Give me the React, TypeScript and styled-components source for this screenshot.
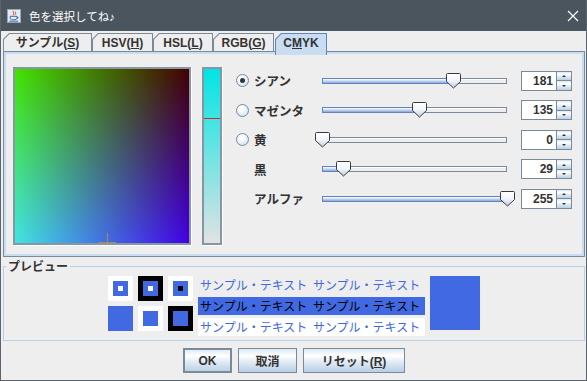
import React from "react";
import styled, { createGlobalStyle } from "styled-components";

const UI = `"Liberation Sans", "Noto Sans CJK JP", sans-serif`;
const JP = `"Noto Sans CJK JP", "Liberation Sans", sans-serif`;

const METAL = "linear-gradient(to bottom, #dde8f3 0%, #ffffff 30%, #dde8f3 60%, #b8cfe5 100%)";

const GlobalStyle = createGlobalStyle`
    html, body {
        margin: 0;
        padding: 0;
        background: #eeeeee;
    }
    body {
        font-family: ${UI};
    }
`;

const Window = styled.div`
    width: 587px;
    height: 381px;
    box-sizing: border-box;
    display: flex;
    flex-direction: column;
    background: #eeeeee;
    border: 1px solid #5a646c;
    border-top: none;
    overflow: hidden;
`;

const TitleBar = styled.div`
    flex: none;
    height: 31px;
    display: flex;
    align-items: center;
    padding: 0 8px 0 7px;
    background: #4b555d;
    margin: 0 -1px;
`;

const Title = styled.span`
    flex: 1;
    margin-left: 8px;
    color: #ffffff;
    font-family: ${UI};
    font-size: 11.5px;
`;

const Body = styled.div`
    flex: 1;
    display: flex;
    flex-direction: column;
    padding: 2px 1px 0 2px;
`;

const TabStrip = styled.div`
    display: flex;
    align-items: flex-end;
    height: 18px;
    position: relative;
    z-index: 2;
`;

const Tab = styled.div<{ $w: number; $active?: boolean }>`
    position: relative;
    flex: none;
    width: ${(p) => p.$w}px;
    height: ${(p) => (p.$active ? 22 : 18)}px;
    margin-bottom: ${(p) => (p.$active ? -4 : 0)}px;
    margin-left: ${(p) => (p.$active ? 1 : 0)}px;
    background: ${(p) => (p.$active ? "#6382bf" : "#7a8a99")};
    clip-path: polygon(0 6px, 6px 0, 100% 0, 100% 100%, 0 100%);
`;

const TabFace = styled.div<{ $active?: boolean }>`
    position: absolute;
    top: 1px;
    left: 1px;
    right: 1px;
    bottom: 0;
    display: flex;
    align-items: ${(p) => (p.$active ? "flex-start" : "center")};
    justify-content: center;
    padding-top: ${(p) => (p.$active ? 1 : 0)}px;
    box-sizing: border-box;
    background: ${(p) => (p.$active ? "#c8ddf2" : "#eeeeee")};
    clip-path: polygon(0 5.5px, 5.5px 0, 100% 0, 100% 100%, 0 100%);
    font-family: ${UI};
    font-weight: bold;
    font-size: 12px;
    line-height: 16px;
    color: #333333;
`;

const U = styled.span`
    text-decoration: underline;
    text-underline-offset: 1px;
`;

const TabPanel = styled.div`
    flex: none;
    height: 206px;
    box-sizing: border-box;
    display: flex;
    align-items: flex-start;
    padding: 15px 0 0 9px;
    border: 1px solid #7a8a99;
    box-shadow: inset 0 0 0 2px #c8ddf2;
`;

const ColorField = styled.div`
    position: relative;
    flex: none;
    width: 178px;
    height: 178px;
    box-sizing: border-box;
    border: 2px solid #8796a5;
    box-shadow: 1px 1px 0 #ffffff;
    background:
        linear-gradient(to bottom, rgb(0, 0, 0), rgb(0, 0, 228)),
        linear-gradient(to right, rgb(66, 228, 0), rgb(66, 0, 0));
    background-blend-mode: screen;
`;

const FieldMarker = styled.svg`
    position: absolute;
    bottom: 0;
`;

const ColorBar = styled.div`
    position: relative;
    flex: none;
    width: 20px;
    height: 178px;
    margin-left: 11px;
    box-sizing: border-box;
    border: 2px solid #8796a5;
    box-shadow: 1px 1px 0 #ffffff;
    background: linear-gradient(to bottom, rgb(0, 228, 228), rgb(226, 226, 226));
`;

const BarMarker = styled.div`
    position: absolute;
    left: 0;
    right: 0;
    height: 1px;
    background: #d62828;
`;

const Controls = styled.div`
    display: flex;
    flex-direction: column;
    margin: -1px 0 0 14px;
`;

const ControlRow = styled.div`
    display: grid;
    grid-template-columns: 18px 61px 200px 57px;
    align-items: center;
    height: 29.5px;
`;

const Radio = styled.span<{ $checked?: boolean }>`
    width: 13px;
    height: 13px;
    box-sizing: border-box;
    border-radius: 50%;
    border: 1px solid #7a8a99;
    background: radial-gradient(circle at 40% 35%, #ffffff 20%, #c8ddf2 90%);
    display: flex;
    align-items: center;
    justify-content: center;

    &::after {
        content: "";
        display: ${(p) => (p.$checked ? "block" : "none")};
        width: 5px;
        height: 5px;
        border-radius: 50%;
        background: #333333;
    }
`;

const Label = styled.span`
    grid-column: 2;
    font-family: ${JP};
    font-weight: bold;
    font-size: 12.5px;
    color: #333333;
    white-space: nowrap;
`;

const SliderBox = styled.div`
    position: relative;
    grid-column: 3;
    display: flex;
    height: 16px;
    padding-top: 5px;
    box-sizing: border-box;
`;

const Track = styled.div`
    position: relative;
    flex: 1;
    height: 6px;
    margin: 0 8px 0 7px;
    box-sizing: border-box;
    border: 1px solid #7a8a99;
    background: #eeeeee;
    box-shadow: inset 1px 1px 0 #ffffff;
`;

const TrackFill = styled.div`
    position: absolute;
    top: -1px;
    bottom: -1px;
    left: -1px;
    box-sizing: border-box;
    border: 1px solid #6382bf;
    background: linear-gradient(to bottom, #ffffff 0%, #c8ddf2 45%, #8ca6d4 100%);
`;

const Thumb = styled.svg`
    position: absolute;
    top: 0;
`;

const Spinner = styled.div`
    grid-column: 4;
    justify-self: end;
    display: flex;
    width: 51px;
    height: 20px;
    box-sizing: border-box;
    border: 1px solid #7a8a99;
`;

const SpinField = styled.div`
    flex: 1;
    background: #ffffff;
    border-right: 1px solid #7a8a99;
    text-align: right;
    padding-right: 3px;
    font-family: ${UI};
    font-weight: bold;
    font-size: 12px;
    line-height: 18px;
    color: #333333;
`;

const SpinButtons = styled.div`
    width: 14px;
    display: flex;
    flex-direction: column;
`;

const SpinButton = styled.div<{ $down?: boolean }>`
    flex: 1;
    display: flex;
    align-items: center;
    justify-content: center;
    background: ${METAL};
    border-top: ${(p) => (p.$down ? "1px solid #7a8a99" : "none")};

    &::after {
        content: "";
        width: 0;
        height: 0;
        border-left: 2px solid transparent;
        border-right: 2px solid transparent;
        ${(p) => (p.$down ? "border-top: 2px solid #333;" : "border-bottom: 2px solid #333;")}
    }
`;

const Preview = styled.fieldset`
    margin: 2px 0 0;
    padding: 3px 0 4px;
    border: 1px solid #b8cfe5;
    min-width: 0;
`;

const Legend = styled.legend`
    margin-left: 2px;
    padding: 0 2px;
    font-family: ${JP};
    font-weight: bold;
    font-size: 12px;
    line-height: 14px;
    color: #333333;
`;

const PreviewContent = styled.div`
    display: flex;
    justify-content: center;
    align-items: flex-start;
    gap: 5px;
`;

const SwatchGrid = styled.div`
    display: grid;
    grid-template-columns: repeat(3, 25px);
    grid-auto-rows: 25px;
    gap: 5px;
`;

const Swatch = styled.div<{ $outer: string }>`
    display: flex;
    align-items: center;
    justify-content: center;
    background: ${(p) => p.$outer};
`;

const SwatchInner = styled.div<{ $dot?: string }>`
    width: 15px;
    height: 15px;
    display: flex;
    align-items: center;
    justify-content: center;
    background: #4169e1;

    &::after {
        content: "";
        display: ${(p) => (p.$dot ? "block" : "none")};
        width: 5px;
        height: 5px;
        background: ${(p) => p.$dot || "transparent"};
    }
`;

const SampleColumn = styled.div`
    width: 227px;
    display: flex;
    flex-direction: column;
    gap: 3px;
`;

const SampleLine = styled.div<{ $bg: string; $color: string }>`
    height: 18px;
    line-height: 18px;
    padding-left: 2px;
    background: ${(p) => p.$bg};
    color: ${(p) => p.$color};
    font-family: ${JP};
    font-size: 12px;
    word-spacing: 3px;
    white-space: nowrap;
    overflow: hidden;
`;

const BigSwatch = styled.div`
    width: 50px;
    height: 54px;
    background: #4169e1;
`;

const ButtonRow = styled.div`
    display: flex;
    justify-content: center;
    gap: 6px;
    margin-top: 7px;
`;

const Button = styled.button<{ $w: number; $default?: boolean }>`
    width: ${(p) => p.$w}px;
    height: 25px;
    padding: 0;
    border: 1px solid #7a8a99;
    box-shadow: ${(p) => (p.$default ? "inset 0 0 0 1px #7a8a99" : "none")};
    background: ${METAL};
    font-family: ${UI};
    font-weight: bold;
    font-size: 12px;
    color: #333333;
`;

const JavaIcon = () => (
    <svg width="14" height="14" viewBox="0 0 14 14">
        <rect x="0.5" y="0.5" width="13" height="13" fill="#e4ebf2" stroke="#9aa8b6" />
        <path d="M6.5 1.8 C5 3.3 8 4 6.3 6.2 M8.6 2.6 C7.8 3.6 9.4 4.2 8.4 5.6" fill="none" stroke="#e0452f" strokeWidth="1" />
        <path d="M3.2 7.3 H10 V9.4 C10 11.2 3.2 11.2 3.2 9.4 Z" fill="none" stroke="#3b68a8" strokeWidth="1" />
        <path d="M10 8 C11.6 8 11.6 9.6 10 9.6" fill="none" stroke="#3b68a8" strokeWidth="0.9" />
        <path d="M2.2 12.2 H11.2" stroke="#3b68a8" strokeWidth="1" />
    </svg>
);

const CloseIcon = () => (
    <svg width="12" height="12" viewBox="0 0 12 12">
        <path d="M1 1 L11 11 M11 1 L1 11" stroke="#ffffff" strokeWidth="1.2" />
    </svg>
);

type Channel = { label: string; value: number; radio: boolean; checked?: boolean };

const CHANNELS: Channel[] = [
    { label: "シアン", value: 181, radio: true, checked: true },
    { label: "マゼンタ", value: 135, radio: true },
    { label: "黄", value: 0, radio: true },
    { label: "黒", value: 29, radio: false },
    { label: "アルファ", value: 255, radio: false },
];

const TABS = [
    { w: 89, text: "サンプル", key: "S" },
    { w: 61, text: "HSV", key: "H" },
    { w: 60, text: "HSL", key: "L" },
    { w: 61, text: "RGB", key: "G" },
];

const TRACK_W = 185;

const Slider = ({ value }: { value: number }) => {
    const pos = (value / 255) * TRACK_W;
    return (
        <SliderBox>
            <Track>
                <TrackFill style={{ width: pos > 0 ? pos + 1 : 0, display: pos > 0 ? "block" : "none" }} />
            </Track>
            <Thumb width="15" height="16" viewBox="0 0 15 16" style={{ left: 7 + pos - 7.5 }}>
                <defs>
                    <linearGradient id="thumbFill" x1="0" y1="0" x2="0" y2="1">
                        <stop offset="0" stopColor="#ffffff" />
                        <stop offset="0.5" stopColor="#f2f6fb" />
                        <stop offset="1" stopColor="#b8cfe5" />
                    </linearGradient>
                </defs>
                <path d="M1.5 0.5 H13.5 Q14.5 0.5 14.5 1.5 V8.5 L7.5 15 L0.5 8.5 V1.5 Q0.5 0.5 1.5 0.5 Z" fill="url(#thumbFill)" stroke="#3a3a3a" strokeWidth="1" />
            </Thumb>
        </SliderBox>
    );
};

const SAMPLE = "サンプル・テキスト サンプル・テキスト";

const App = () => {
    const markerX = (135 / 255) * 100;
    const barTop = ((255 - 181) / 255) * 174 - 1;
    return (
        <>
            <GlobalStyle />
            <Window>
                <TitleBar>
                    <JavaIcon />
                    <Title>色を選択してね♪</Title>
                    <CloseIcon />
                </TitleBar>
                <Body>
                    <TabStrip>
                        {TABS.map((t) => (
                            <Tab $w={t.w} key={t.key}>
                                <TabFace>
                                    {t.text}(<U>{t.key}</U>)
                                </TabFace>
                            </Tab>
                        ))}
                        <Tab $w={52} $active>
                            <TabFace $active>
                                C<U>M</U>YK
                            </TabFace>
                        </Tab>
                    </TabStrip>
                    <TabPanel>
                        <ColorField>
                            <FieldMarker width="17" height="10" viewBox="0 0 17 10" style={{ left: `calc(${markerX}% - 8px)` }}>
                                <path d="M8.5 0 V10 M0 9.5 H17" stroke="#a88c4a" strokeWidth="1" />
                            </FieldMarker>
                        </ColorField>
                        <ColorBar>
                            <BarMarker style={{ top: barTop }} />
                        </ColorBar>
                        <Controls>
                            {CHANNELS.map((c) => (
                                <ControlRow key={c.label}>
                                    {c.radio ? <Radio $checked={c.checked} /> : <span />}
                                    <Label>{c.label}</Label>
                                    <Slider value={c.value} />
                                    <Spinner>
                                        <SpinField>{c.value}</SpinField>
                                        <SpinButtons>
                                            <SpinButton />
                                            <SpinButton $down />
                                        </SpinButtons>
                                    </Spinner>
                                </ControlRow>
                            ))}
                        </Controls>
                    </TabPanel>
                    <Preview>
                        <Legend>プレビュー</Legend>
                        <PreviewContent>
                            <SwatchGrid>
                                <Swatch $outer="#ffffff"><SwatchInner $dot="#ffffff" /></Swatch>
                                <Swatch $outer="#000000"><SwatchInner $dot="#ffffff" /></Swatch>
                                <Swatch $outer="#ffffff"><SwatchInner $dot="#000000" /></Swatch>
                                <Swatch $outer="#4169e1" />
                                <Swatch $outer="#ffffff"><SwatchInner /></Swatch>
                                <Swatch $outer="#000000"><SwatchInner /></Swatch>
                            </SwatchGrid>
                            <SampleColumn>
                                <SampleLine $bg="transparent" $color="#4169e1">{SAMPLE}</SampleLine>
                                <SampleLine $bg="#4169e1" $color="#000000">{SAMPLE}</SampleLine>
                                <SampleLine $bg="#ffffff" $color="#4169e1">{SAMPLE}</SampleLine>
                            </SampleColumn>
                            <BigSwatch />
                        </PreviewContent>
                    </Preview>
                    <ButtonRow>
                        <Button $w={49} $default>OK</Button>
                        <Button $w={59}>取消</Button>
                        <Button $w={102}>リセット(<U>R</U>)</Button>
                    </ButtonRow>
                </Body>
            </Window>
        </>
    );
};

export default App;
